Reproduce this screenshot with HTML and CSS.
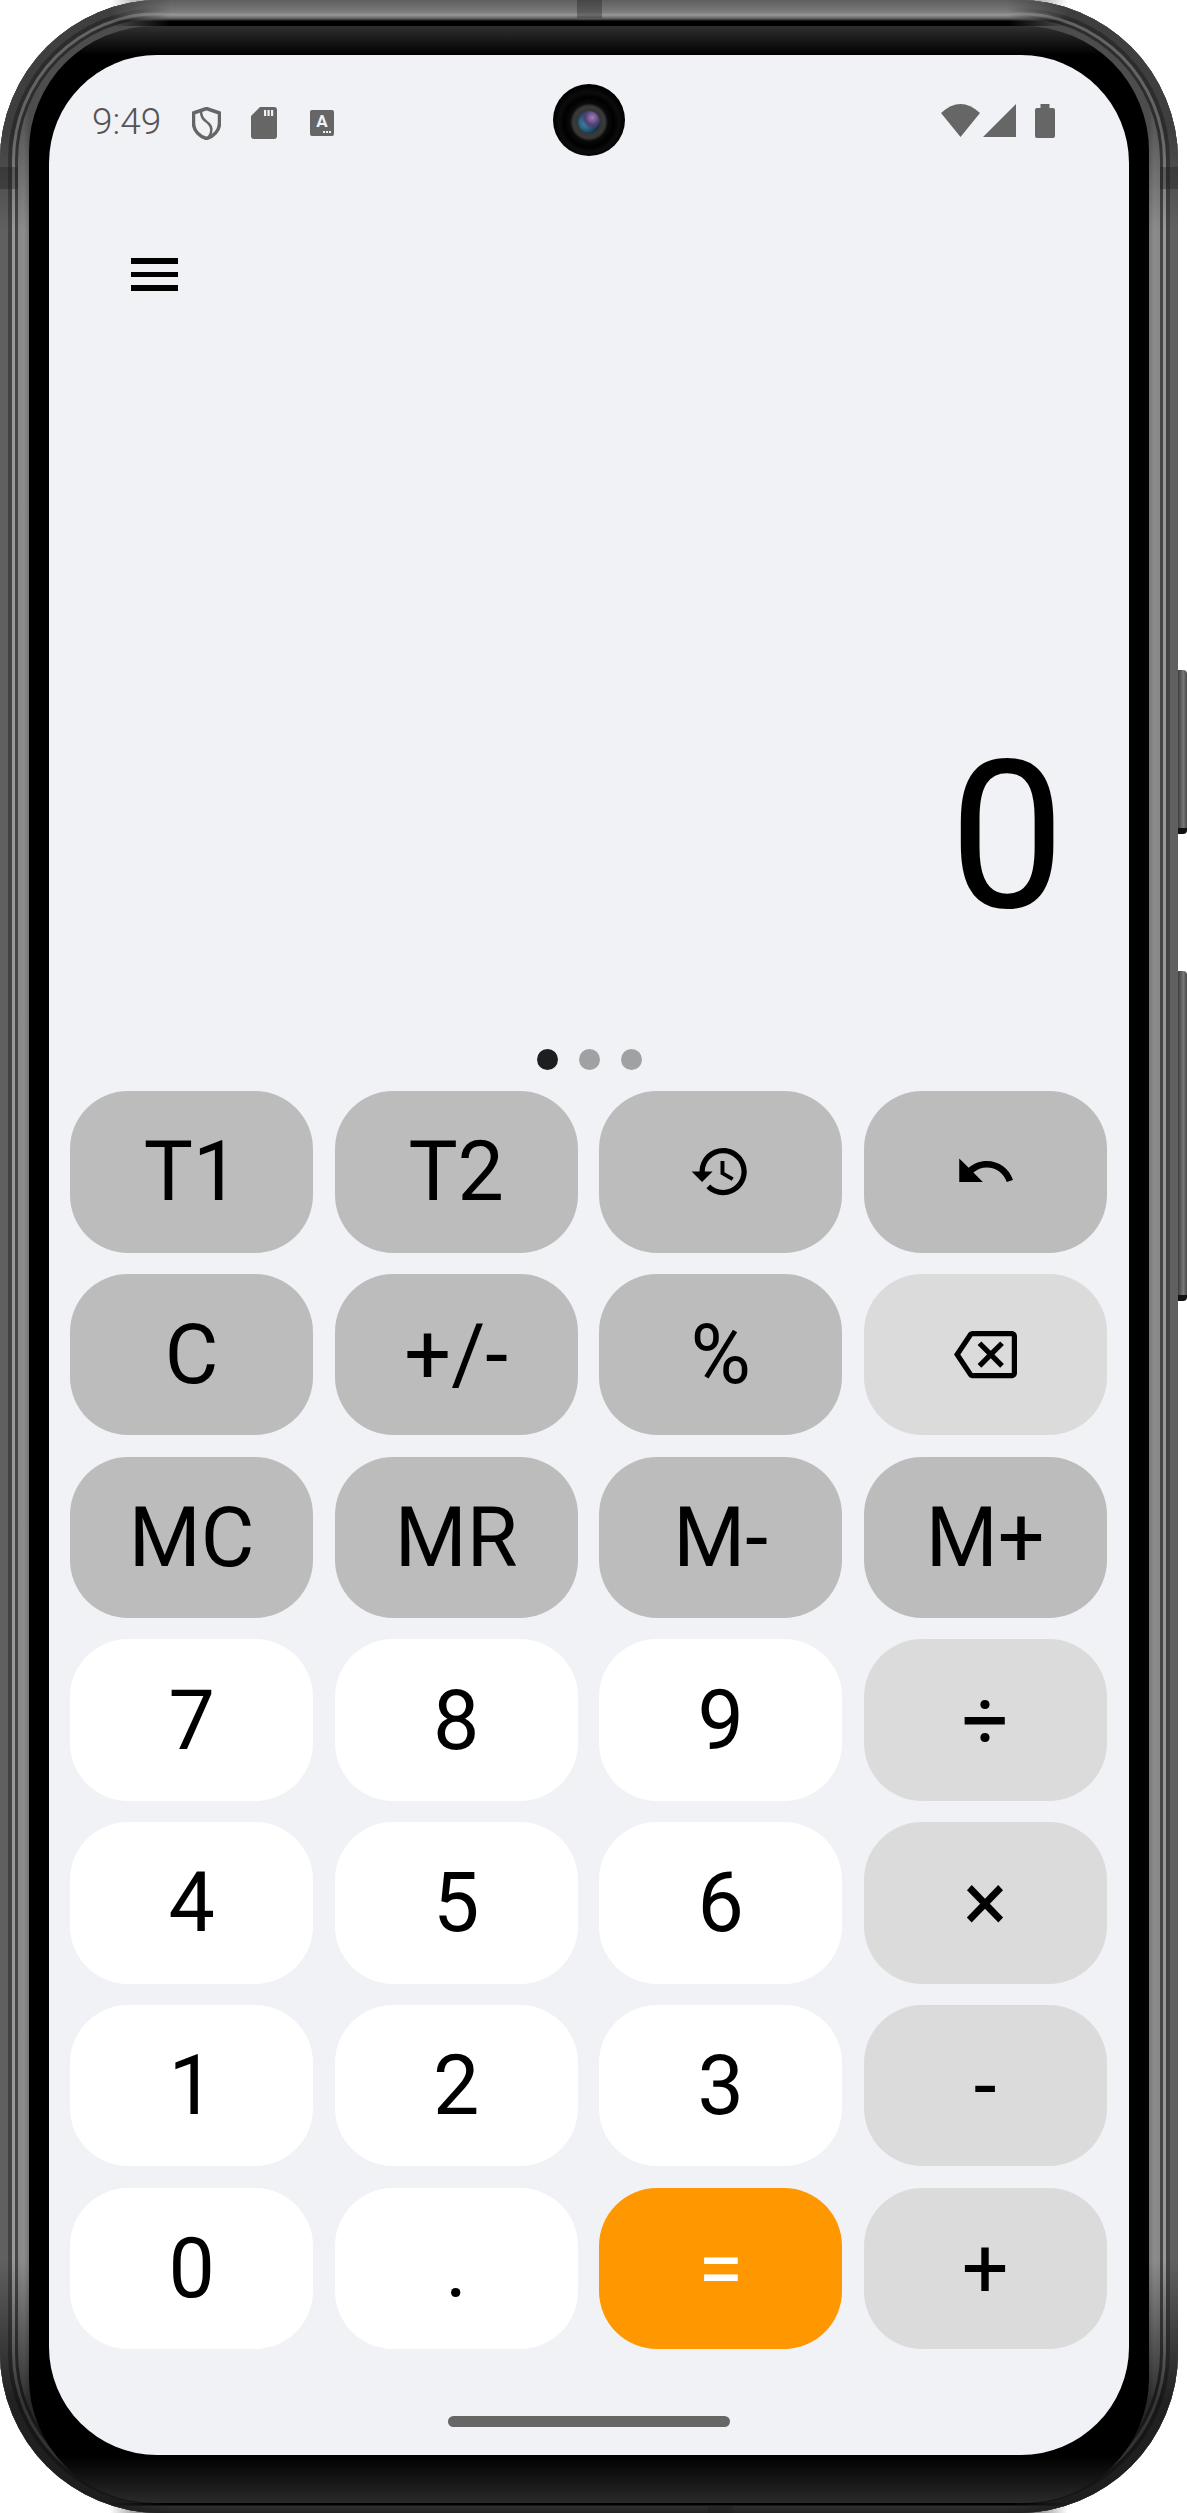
FILE: index.html
```html
<!DOCTYPE html>
<html lang="en">
<head>
    <meta charset="UTF-8">
    <meta name="viewport" content="width=device-width, initial-scale=1.0">
    <title>Calculator</title>
    <link rel="stylesheet" href="styles.css">
</head>
<body>
    <div class="phone">
        <div class="edge edge-top"></div>
        <div class="edge edge-bottom"></div>
        <div class="tab tab-top"></div>
        <div class="tab tab-bottom"></div>
        <div class="tab tab-left"></div>
        <div class="tab tab-right"></div>
        <div class="side-key key-power"></div>
        <div class="side-key key-volume"></div>

        <div class="bezel">
            <div class="screen">
                <div class="camera"><div class="lens"></div></div>

                <div class="status-bar">
                    <div class="status-left">
                        <span class="time">9:49</span>
                        <svg class="icon-shield" viewBox="0 0 29 33"><path d="M14.5 1.5 27.5 6v10c0 8-6.500 14-13 15.500C8 30 1.500 24 1.500 16V6z" fill="none" stroke="#666" stroke-width="3.500" stroke-linejoin="round"/><path d="M9 4c0 8 4 9 8 13 3 3 3 8 0 13" fill="none" stroke="#666" stroke-width="2.500"/></svg>
                        <svg class="icon-sd" viewBox="0 0 26 32"><path d="M9 0h14a3 3 0 0 1 3 3v26a3 3 0 0 1-3 3H3a3 3 0 0 1-3-3V9z" fill="#666"/><path d="M13 3h2.200v6H13zM16.500 3h2.200v6h-2.200zM20 3h2.200v6H20z" fill="#f1f2f6"/></svg>
                        <div class="icon-card">A<span class="card-dots"></span></div>
                    </div>
                    <div class="status-right">
                        <svg class="icon-wifi" viewBox="0 0 39 33"><path d="M19.500 33 0 9q19.500-18 39 0z" fill="#666"/></svg>
                        <svg class="icon-signal" viewBox="0 0 33 33"><path d="M33 0v33H0z" fill="#666"/></svg>
                        <svg class="icon-battery" viewBox="0 0 20 34"><path d="M5.500 0h9v4H18a2 2 0 0 1 2 2v26a2 2 0 0 1-2 2H2a2 2 0 0 1-2-2V6a2 2 0 0 1 2-2h3.500z" fill="#666"/></svg>
                    </div>
                </div>

                <div class="menu-button">
                    <span></span>
                    <span></span>
                    <span></span>
                </div>

                <div class="display">0</div>

                <div class="dots">
                    <span class="dot active"></span>
                    <span class="dot"></span>
                    <span class="dot"></span>
                </div>

                <div class="keypad">
                    <div class="key dark">T1</div>
                    <div class="key dark">T2</div>
                    <div class="key dark">
                        <svg viewBox="0 0 24 24"><path d="M13 3a9 9 0 0 0-9 9H1l3.890 3.890.07.14L9 12H6c0-3.870 3.130-7 7-7s7 3.130 7 7-3.130 7-7 7c-1.930 0-3.680-.79-4.940-2.060l-1.420 1.420C8.270 19.990 10.510 21 13 21c4.970 0 9-4.030 9-9s-4.030-9-9-9zm-1 5v5l4.280 2.540.72-1.210-3.500-2.080V8H12z"/></svg>
                    </div>
                    <div class="key dark">
                        <svg viewBox="0 0 24 24"><path d="M12.500 8c-2.650 0-5.050.99-6.900 2.600L2 7v9h9l-3.620-3.620c1.390-1.160 3.160-1.880 5.120-1.880 3.540 0 6.550 2.310 7.600 5.500l2.370-.78C21.080 11.030 17.150 8 12.500 8z"/></svg>
                    </div>

                    <div class="key dark">C</div>
                    <div class="key dark">+/-</div>
                    <div class="key dark">%</div>
                    <div class="key light">
                        <svg viewBox="0 0 24 24"><path d="M22 3H7c-.69 0-1.230.35-1.590.88L0 12l5.410 8.110c.36.53.9.89 1.590.89h15c1.100 0 2-.9 2-2V5c0-1.100-.9-2-2-2zm0 16H7.070L2.400 12l4.660-7H22v14zm-11.590-2L14 13.410 17.590 17 19 15.590 15.410 12 19 8.410 17.590 7 14 10.590 10.410 7 9 8.410 12.590 12 9 15.590z"/></svg>
                    </div>

                    <div class="key dark">MC</div>
                    <div class="key dark">MR</div>
                    <div class="key dark">M-</div>
                    <div class="key dark">M+</div>

                    <div class="key">7</div>
                    <div class="key">8</div>
                    <div class="key">9</div>
                    <div class="key light">÷</div>

                    <div class="key">4</div>
                    <div class="key">5</div>
                    <div class="key">6</div>
                    <div class="key light">×</div>

                    <div class="key">1</div>
                    <div class="key">2</div>
                    <div class="key">3</div>
                    <div class="key light">-</div>

                    <div class="key">0</div>
                    <div class="key">.</div>
                    <div class="key equals">=</div>
                    <div class="key light">+</div>
                </div>

                <div class="home-bar"></div>
            </div>
        </div>
    </div>
</body>
</html>
```

FILE: styles.css
```css
body {
    margin: 0;
    background: #fff;
    font-family: Roboto, "Liberation Sans", sans-serif;
}

/* phone body */
.phone {
    position: relative;
    box-sizing: border-box;
    width: 1178px;
    height: 2513px;
    padding: 26px 29px 10px;
    border-radius: 160px;
    background: linear-gradient(to right, #7a7a7a 0, #8c8c8c 24px, #767676 29px, #767676 calc(100% - 29px), #8c8c8c calc(100% - 24px), #7a7a7a 100%);
    box-shadow:
        inset 0 0 0 8px #606060,
        inset 0 0 0 12px #434343,
        inset 0 0 0 15px #999,
        inset 0 0 0 18px #454545;
}
/* darkens the rings around the corners */
.phone::before {
    content: "";
    position: absolute;
    inset: 0;
    border-radius: inherit;
    background: linear-gradient(to bottom, rgba(0, 0, 0, 0.35) 0, rgba(0, 0, 0, 0.35) 130px, transparent 230px, transparent 2260px, rgba(0, 0, 0, 0.65) 2400px, rgba(0, 0, 0, 0.7) 100%);
}
.bezel {
    position: relative;
    z-index: 1;
    box-sizing: border-box;
    height: 2477px;
    padding: 29px 20px 48px;
    border-radius: 125px;
    background:
        linear-gradient(to bottom, #303030 0, #000 29px, #000 2429px, #2a2a2a 100%);
}
.screen {
    position: relative;
    display: flex;
    flex-direction: column;
    height: 2400px;
    border-radius: 108px;
    background: #f1f2f6;
}

.edge {
    position: absolute;
    left: 110px;
    right: 110px;
    -webkit-mask-image: linear-gradient(to right, transparent, #000 60px, #000 calc(100% - 60px), transparent);
    mask-image: linear-gradient(to right, transparent, #000 60px, #000 calc(100% - 60px), transparent);
}
.edge-top {
    top: 0;
    height: 26px;
    background: linear-gradient(to bottom, #5e5e5e 0, #7b7b7b 12px, #989898 15px, #6a6a6a 18px, #333 20px, #000 21px, #000 100%);
}
.edge-bottom {
    bottom: 0;
    height: 10px;
    background: linear-gradient(to bottom, #000 0, #000 2px, #2f2f2f 3px, #222 100%);
}
.tab {
    position: absolute;
    background: rgba(30, 30, 30, 0.35);
}
.tab-top {
    top: 0;
    left: 577px;
    width: 25px;
    height: 18px;
}
.tab-bottom {
    bottom: 0;
    left: 708px;
    width: 25px;
    height: 7px;
}
.tab-left {
    top: 167px;
    left: 0;
    width: 18px;
    height: 22px;
}
.tab-right {
    top: 167px;
    right: 0;
    width: 18px;
    height: 22px;
}
.side-key {
    position: absolute;
    left: 100%;
    width: 9px;
    border-radius: 0 4px 4px 0;
    background: linear-gradient(to right, #3e3e3e, #777 60%, #4a4a4a);
    border-bottom: 6px solid #111;
    box-sizing: border-box;
}
.key-power {
    top: 670px;
    height: 164px;
}
.key-volume {
    top: 971px;
    height: 330px;
}

/* status bar */
.camera {
    position: absolute;
    top: 29px;
    left: 504px;
    display: flex;
    align-items: center;
    justify-content: center;
    width: 72px;
    height: 72px;
    border-radius: 50%;
    background: radial-gradient(circle at 50% 53%, #2a2a2a 0, #3a3a3a 16px, #0a0a0a 19px, #000 25px, #0c0c0c 30px, #000 36px);
}
.lens {
    width: 22px;
    height: 22px;
    margin-top: 4px;
    border-radius: 50%;
    background: radial-gradient(circle at 65% 30%, #a57fb5 0, #4c3f73 35%, transparent 55%), radial-gradient(circle at 35% 55%, #3f93b0 0, #1c4a66 50%, #0b1018 85%);
}
.status-bar {
    display: flex;
    justify-content: space-between;
    align-items: flex-start;
    height: 36px;
    padding: 49px 74px 0 43px;
}
.status-left {
    display: flex;
    align-items: center;
    height: 36px;
}
.time {
    width: 69px;
    font-size: 37px;
    font-weight: 300;
    color: #555;
    line-height: 36px;
}
.icon-shield {
    width: 29px;
    height: 33px;
    margin: 3px 0 0 31px;
}
.icon-sd {
    width: 26px;
    height: 32px;
    margin: 2px 0 0 30px;
}
.icon-card {
    position: relative;
    width: 24px;
    height: 26px;
    margin: 2px 0 0 33px;
    border-radius: 2px;
    background: #666;
    color: #f1f2f6;
    font-size: 17px;
    font-weight: 700;
    line-height: 23px;
    text-align: center;
}
.card-dots {
    position: absolute;
    right: 3px;
    bottom: 3px;
    width: 2px;
    height: 2px;
    background: #f1f2f6;
    box-shadow: -3px 0 #f1f2f6, -6px 0 #f1f2f6;
}
.status-right {
    display: flex;
    align-items: flex-start;
}
.icon-wifi {
    width: 39px;
    height: 33px;
}
.icon-signal {
    width: 33px;
    height: 33px;
    margin-left: 3px;
}
.icon-battery {
    width: 20px;
    height: 34px;
    margin-left: 19px;
}

/* toolbar and result */
.menu-button {
    display: flex;
    flex-direction: column;
    gap: 8px;
    width: 47px;
    margin: 118px 0 0 82px;
}
.menu-button span {
    height: 5.500px;
    background: #000;
}
.display {
    height: 225px;
    margin-top: 433.500px;
    padding-right: 64px;
    font-size: 206px;
    line-height: 225px;
    text-align: right;
    color: #000;
}
.dots {
    display: flex;
    justify-content: center;
    gap: 21px;
    margin-top: 99.500px;
}
.dot {
    width: 21px;
    height: 21px;
    border-radius: 50%;
    background: #a0a1a3;
}
.dot.active {
    background: #1d1e20;
}

/* keypad */
.keypad {
    display: grid;
    grid-template-columns: repeat(4, 243.250px);
    grid-auto-rows: 161.500px;
    gap: 21.300px;
    margin: 21.500px 0 0 21px;
}
.key {
    display: flex;
    align-items: center;
    justify-content: center;
    border-radius: 58px;
    background: #fff;
    color: #000;
    font-size: 82.500px;
}
.key svg {
    width: 63px;
    height: 63px;
}
.key.dark {
    background: #bcbcbc;
}
.key.light {
    background: #dbdbdb;
}
.key.equals {
    background: #ff9800;
    color: #fff;
}
.home-bar {
    align-self: center;
    width: 282px;
    height: 11px;
    margin-top: 66.500px;
    border-radius: 6px;
    background: #666;
}
```
